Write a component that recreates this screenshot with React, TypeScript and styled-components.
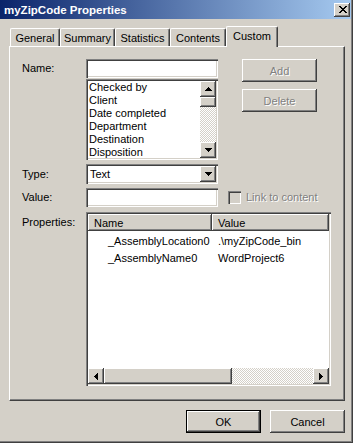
import React from "react";
import styled, { createGlobalStyle, css } from "styled-components";

const FACE = "#d4d0c8";
const SHADOW = "#808080";
const DARK = "#404040";

const Global = createGlobalStyle`
  html, body { margin: 0; padding: 0; background: ${FACE}; }
  body { font-family: "Liberation Sans", Arial, sans-serif; font-size: 11px; color: #000; }
  * { box-sizing: border-box; }
`;

const raised = css`
  background: ${FACE};
  box-shadow: inset -1px -1px ${DARK}, inset 1px 1px #fff, inset -2px -2px ${SHADOW};
`;

const sunken = css`
  box-shadow: inset 1px 1px ${SHADOW}, inset 2px 2px ${DARK}, inset -1px -1px #fff, inset -2px -2px ${FACE};
`;

const Window = styled.div`
  width: 353px;
  height: 443px;
  background: ${FACE};
  box-shadow: inset -1px -1px ${DARK}, inset -2px -2px ${SHADOW};
  display: flex;
  flex-direction: column;
  overflow: hidden;
`;

const TitleBar = styled.div`
  width: 351px;
  height: 19px;
  flex: none;
  background: linear-gradient(to right, #0a246a, #a6caf0);
  display: flex;
  align-items: center;
  justify-content: space-between;
  padding: 0 1px 0 4px;
`;

const TitleText = styled.span`
  color: #fff;
  font-weight: bold;
  font-size: 11.5px;
  white-space: nowrap;
`;

const CloseButton = styled.div`
  ${raised};
  width: 16px;
  height: 14px;
  display: flex;
  align-items: center;
  justify-content: center;
  padding-left: 1px;
`;

const TabStrip = styled.div`
  height: 20px;
  margin-top: 7px;
  padding-left: 10px;
  display: flex;
  align-items: flex-end;
  flex: none;
`;

const Tab = styled.div<{ $w: number; $active?: boolean }>`
  width: ${(p) => p.$w}px;
  height: ${(p) => (p.$active ? 21 : 18)}px;
  margin-bottom: ${(p) => (p.$active ? -1 : 0)}px;
  padding-bottom: ${(p) => (p.$active ? 2 : 0)}px;
  background: ${FACE};
  border-top: 1px solid #fff;
  border-left: 1px solid #fff;
  border-right: 1px solid ${DARK};
  box-shadow: inset -1px 0 ${SHADOW};
  border-radius: 2px 2px 0 0;
  display: flex;
  align-items: center;
  justify-content: center;
  position: relative;
  z-index: ${(p) => (p.$active ? 1 : 0)};
  white-space: nowrap;
`;

const Panel = styled.div`
  margin-left: 9px;
  width: 336px;
  height: 355px;
  flex: none;
  border-top: 1px solid #fff;
  border-left: 1px solid #fff;
  border-right: 1px solid ${DARK};
  border-bottom: 1px solid ${DARK};
  box-shadow: inset -1px -1px ${SHADOW};
  padding: 12px 0 0 12px;
  display: flex;
  flex-direction: column;
`;

const Row = styled.div<{ $mt?: number }>`
  display: flex;
  align-items: flex-start;
  margin-top: ${(p) => p.$mt ?? 0}px;
`;

const Label = styled.div<{ $h?: number; $top?: boolean }>`
  width: 64px;
  flex: none;
  height: ${(p) => p.$h ?? 19}px;
  display: flex;
  align-items: ${(p) => (p.$top ? "flex-start" : "center")};
  padding-top: ${(p) => (p.$top ? 4 : 0)}px;
  line-height: 13px;
`;

const FieldCol = styled.div`
  width: 132px;
  flex: none;
  display: flex;
  flex-direction: column;
  gap: 1px;
`;

const TextBox = styled.div<{ $w?: number; $h?: number }>`
  ${sunken};
  background: #fff;
  width: ${(p) => p.$w ?? 132}px;
  height: ${(p) => p.$h ?? 19}px;
  flex: none;
`;

const ListBox = styled.div`
  ${sunken};
  background: #fff;
  width: 132px;
  height: 81px;
  padding: 2px;
  display: flex;
`;

const ListItems = styled.div`
  flex: 1;
  overflow: hidden;
  padding: 0 0 0 1px;
`;

const ListItem = styled.div`
  height: 13px;
  line-height: 13px;
  white-space: nowrap;
`;

const VScroll = styled.div`
  width: 16px;
  display: flex;
  flex-direction: column;
`;

const HScroll = styled.div`
  height: 16px;
  display: flex;
  flex: none;
`;

const ScrollBtn = styled.div`
  ${raised};
  width: 16px;
  height: 16px;
  flex: none;
  display: flex;
  align-items: center;
  justify-content: center;
`;

const Thumb = styled.div<{ $len: number; $horiz?: boolean }>`
  ${raised};
  flex: none;
  ${(p) => (p.$horiz ? `width: ${p.$len}px; height: 16px;` : `height: ${p.$len}px; width: 16px;`)}
`;

const Track = styled.div`
  flex: 1;
  background: repeating-conic-gradient(#fff 0 25%, ${FACE} 0 50%) 0 0 / 2px 2px;
`;

const ButtonCol = styled.div`
  margin-left: 24px;
  display: flex;
  flex-direction: column;
  gap: 7px;
`;

const Button = styled.div<{ $disabled?: boolean; $default?: boolean }>`
  ${raised};
  width: 75px;
  height: 23px;
  display: flex;
  align-items: center;
  justify-content: center;
  color: ${(p) => (p.$disabled ? SHADOW : "#000")};
  text-shadow: ${(p) => (p.$disabled ? "1px 1px #fff" : "none")};
  ${(p) =>
    p.$default &&
    css`
      box-shadow: inset 0 0 0 1px #000, inset -2px -2px ${DARK}, inset 2px 2px #fff, inset -3px -3px ${SHADOW};
    `}
`;

const Combo = styled.div`
  ${sunken};
  background: #fff;
  width: 132px;
  height: 20px;
  padding: 2px;
  display: flex;
  align-items: center;
`;

const ComboText = styled.div`
  flex: 1;
  padding-left: 2px;
  line-height: 13px;
`;

const CheckBox = styled.div`
  ${sunken};
  background: ${FACE};
  width: 13px;
  height: 13px;
  flex: none;
  margin: 3px 0 0 10px;
`;

const DisabledText = styled.div`
  color: ${SHADOW};
  text-shadow: 1px 1px #fff;
  margin: 3px 0 0 5px;
  line-height: 13px;
  white-space: nowrap;
`;

const ListView = styled.div`
  ${sunken};
  background: #fff;
  width: 245px;
  height: 174px;
  padding: 2px;
  display: flex;
  flex-direction: column;
`;

const Header = styled.div`
  display: flex;
  height: 17px;
  flex: none;
`;

const HeaderCell = styled.div<{ $w?: number }>`
  ${raised};
  ${(p) => (p.$w ? `width: ${p.$w}px; flex: none;` : "flex: 1;")}
  height: 17px;
  padding-left: 6px;
  display: flex;
  align-items: center;
  white-space: nowrap;
`;

const Rows = styled.div`
  flex: 1;
  padding-top: 1px;
  overflow: hidden;
`;

const DataRow = styled.div`
  display: flex;
  height: 17px;
  align-items: center;
  white-space: nowrap;
`;

const Cell = styled.div<{ $w?: number; $pad: number }>`
  ${(p) => (p.$w ? `width: ${p.$w}px; flex: none;` : "flex: 1;")}
  padding-left: ${(p) => p.$pad}px;
  overflow: hidden;
`;

const Footer = styled.div`
  display: flex;
  justify-content: flex-end;
  gap: 9px;
  padding-right: 8px;
  margin-top: 9px;
`;

type Dir = "up" | "down" | "left" | "right";

const Arrow = ({ dir }: { dir: Dir }) => {
  const vertical = dir === "up" || dir === "down";
  const w = vertical ? 7 : 4;
  const h = vertical ? 4 : 7;
  const rects = [0, 1, 2, 3].map((i) => {
    const len = 7 - 2 * i;
    if (dir === "down") return <rect key={i} x={i} y={i} width={len} height={1} />;
    if (dir === "up") return <rect key={i} x={i} y={3 - i} width={len} height={1} />;
    if (dir === "right") return <rect key={i} x={i} y={i} width={1} height={len} />;
    return <rect key={i} x={3 - i} y={i} width={1} height={len} />;
  });
  return (
    <svg width={w} height={h} viewBox={`0 0 ${w} ${h}`} shapeRendering="crispEdges" fill="#000">
      {rects}
    </svg>
  );
};

const CloseGlyph = () => {
  const rows = ["11000011", "01100110", "00111100", "00011000", "00111100", "01100110", "11000011"];
  return (
    <svg width={8} height={7} viewBox="0 0 8 7" shapeRendering="crispEdges" fill="#000">
      {rows.flatMap((r, y) =>
        r.split("").map((c, x) => (c === "1" ? <rect key={`${x}-${y}`} x={x} y={y} width={1} height={1} /> : null))
      )}
    </svg>
  );
};

const tabs = [
  { name: "General", w: 50 },
  { name: "Summary", w: 55 },
  { name: "Statistics", w: 55 },
  { name: "Contents", w: 56 },
  { name: "Custom", w: 52, active: true },
];

const listItems = ["Checked by", "Client", "Date completed", "Department", "Destination", "Disposition"];

const props = [
  { name: "_AssemblyLocation0", value: ".\\myZipCode_bin" },
  { name: "_AssemblyName0", value: "WordProject6" },
];

export default function App() {
  return (
    <>
      <Global />
      <Window>
        <TitleBar>
          <TitleText>myZipCode Properties</TitleText>
          <CloseButton>
            <CloseGlyph />
          </CloseButton>
        </TitleBar>
        <TabStrip>
          {tabs.map((t) => (
            <Tab key={t.name} $w={t.w} $active={t.active}>
              {t.name}
            </Tab>
          ))}
        </TabStrip>
        <Panel>
          <Row>
            <Label>Name:</Label>
            <FieldCol>
              <TextBox />
              <ListBox>
                <ListItems>
                  {listItems.map((i) => (
                    <ListItem key={i}>{i}</ListItem>
                  ))}
                </ListItems>
                <VScroll>
                  <ScrollBtn>
                    <Arrow dir="up" />
                  </ScrollBtn>
                  <Thumb $len={10} />
                  <Track />
                  <ScrollBtn>
                    <Arrow dir="down" />
                  </ScrollBtn>
                </VScroll>
              </ListBox>
            </FieldCol>
            <ButtonCol>
              <Button $disabled>Add</Button>
              <Button $disabled>Delete</Button>
            </ButtonCol>
          </Row>
          <Row $mt={4}>
            <Label $h={20}>Type:</Label>
            <Combo>
              <ComboText>Text</ComboText>
              <ScrollBtn>
                <Arrow dir="down" />
              </ScrollBtn>
            </Combo>
          </Row>
          <Row $mt={4}>
            <Label>Value:</Label>
            <TextBox />
            <CheckBox />
            <DisabledText>Link to content</DisabledText>
          </Row>
          <Row $mt={5}>
            <Label $top>Properties:</Label>
            <ListView>
              <Header>
                <HeaderCell $w={124}>Name</HeaderCell>
                <HeaderCell>Value</HeaderCell>
              </Header>
              <Rows>
                {props.map((p) => (
                  <DataRow key={p.name}>
                    <Cell $w={124} $pad={20}>
                      {p.name}
                    </Cell>
                    <Cell $pad={6}>{p.value}</Cell>
                  </DataRow>
                ))}
              </Rows>
              <HScroll>
                <ScrollBtn>
                  <Arrow dir="left" />
                </ScrollBtn>
                <Thumb $len={128} $horiz />
                <Track />
                <ScrollBtn>
                  <Arrow dir="right" />
                </ScrollBtn>
              </HScroll>
            </ListView>
          </Row>
        </Panel>
        <Footer>
          <Button $default>OK</Button>
          <Button>Cancel</Button>
        </Footer>
      </Window>
    </>
  );
}
